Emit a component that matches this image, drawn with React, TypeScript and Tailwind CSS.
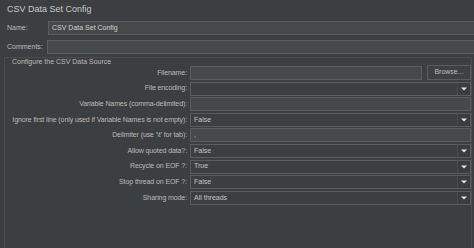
const font = { fontFamily: '"Liberation Sans", Arial, sans-serif' };

function Arrow() {
  return (
    <div className="flex h-full w-[13px] items-center justify-center border-l border-[#4a4d4f] bg-[#3a3d3f]">
      <svg width="6" height="4" viewBox="0 0 6 4">
        <path d="M0 0.5 H6 L3 3.5 Z" fill="#e6e6e6" />
      </svg>
    </div>
  );
}

function Combo({ value }: { value: string }) {
  return (
    <div className="flex h-full flex-1 items-center border border-[#5a5d5f] bg-[#3c3f41]">
      <span className="flex-1 pl-[3px] text-[7px] text-[#c4c4c4]">{value}</span>
      <Arrow />
    </div>
  );
}

function Field({ value = "" }: { value?: string }) {
  return (
    <div className="flex h-full flex-1 items-center border border-[#5a5d5f] bg-[#45494a] pl-[3px] text-[7px] text-[#c4c4c4]">
      {value}
    </div>
  );
}

function Row({ label, children }: { label: string; children: React.ReactNode }) {
  return (
    <div className="flex h-[14px] items-center">
      <div className="flex min-w-0 flex-1 justify-end pr-[3px]">
        <span className="whitespace-nowrap text-[7px] tracking-[-0.1px] text-[#bbbbbb]">{label}</span>
      </div>
      <div className="flex h-full w-[281px] gap-[5px]">{children}</div>
    </div>
  );
}

export default function App() {
  return (
    <div className="h-[248px] w-[474px] overflow-hidden bg-[#3c3f41]" style={font}>
      <div className="pl-[7px] pt-[3px] text-[9px] leading-[13px] text-[#c8c8c8]">CSV Data Set Config</div>

      <div className="mt-[5px] flex h-[14px] items-center pl-[7px]">
        <span className="w-[41px] text-[7px] text-[#bbbbbb]">Name:</span>
        <div className="flex h-full flex-1 items-center border border-r-0 border-[#5a5d5f] bg-[#45494a] pl-[3px] text-[7px] text-[#d0d0d0]">
          CSV Data Set Config
        </div>
      </div>

      <div className="mt-[5px] flex h-[14px] items-center pl-[7px]">
        <span className="w-[40px] text-[7px] text-[#bbbbbb]">Comments:</span>
        <div className="h-full flex-1 border border-r-0 border-[#5a5d5f] bg-[#45494a]" />
      </div>

      <div className="ml-[4px] mr-[2px] mt-[3px] h-[200px] border border-b-0 border-[#4a4d50]">
        <div className="pl-[7px] text-[7px] leading-[7px] text-[#bbbbbb]">Configure the CSV Data Source</div>
        <div className="mt-[1px] flex flex-col gap-y-[1.6px]">
          <Row label="Filename:">
            <Field />
            <div className="flex h-[15px] w-[44px] -translate-y-[1px] items-center justify-center border border-[#5a5d5f] bg-[#3e4143] text-[7px] text-[#bbbbbb]">
              Browse...
            </div>
          </Row>
          <Row label="File encoding:">
            <Combo value="" />
          </Row>
          <Row label="Variable Names (comma-delimited):">
            <Field />
          </Row>
          <Row label="Ignore first line (only used if Variable Names is not empty):">
            <Combo value="False" />
          </Row>
          <Row label={"Delimiter (use '\\t' for tab):"}>
            <Field value="," />
          </Row>
          <Row label="Allow quoted data?:">
            <Combo value="False" />
          </Row>
          <Row label="Recycle on EOF ?:">
            <Combo value="True" />
          </Row>
          <Row label="Stop thread on EOF ?:">
            <Combo value="False" />
          </Row>
          <Row label="Sharing mode:">
            <Combo value="All threads" />
          </Row>
        </div>
      </div>
    </div>
  );
}
